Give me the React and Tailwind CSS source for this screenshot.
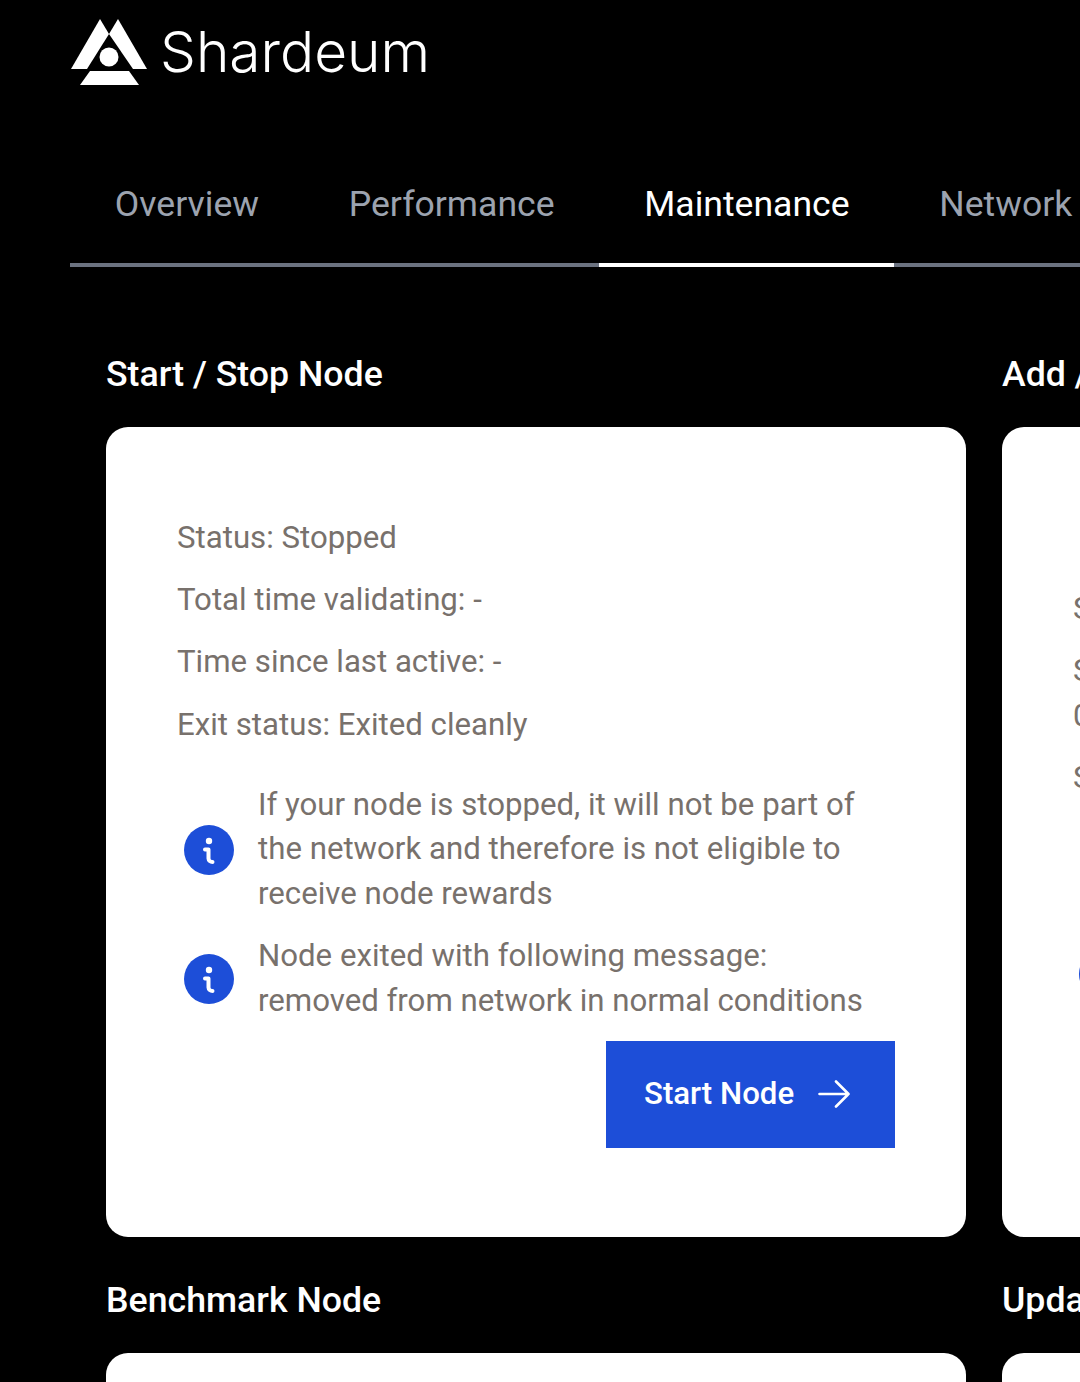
import React from "react";

const tabs = ["Overview", "Performance", "Maintenance", "Network", "Settings"];

const Logo = () => (
  <svg width="77" height="68" viewBox="0 0 77 68" fill="white" className="shrink-0">
    <path d="M0 51L29 1L38 16L16 51Z" />
    <path d="M76 51L47 1L38 16L62 51Z" />
    <circle cx="38" cy="39" r="9.5" />
    <path d="M19 53H58L68 67H9Z" />
  </svg>
);

const InfoIcon = () => (
  <svg width="50" height="50" viewBox="0 0 50 50" className="shrink-0">
    <circle cx="25" cy="25" r="25" fill="#1d4ed8" />
    <circle cx="25" cy="16" r="3.2" fill="white" />
    <path d="M21 24.5H24.5L24.5 33.5C24.5 35.5 26.5 37 28.5 37" fill="none" stroke="white" strokeWidth="4" strokeLinecap="round" strokeLinejoin="round" />
  </svg>
);

const Card = ({ title, children, cardClass, titleClass }) => (
  <div className="w-[860px] shrink-0">
    <h2 className={`text-[35.7px] leading-[44px] font-medium text-white whitespace-nowrap ${titleClass}`}>{title}</h2>
    <div className={`bg-white rounded-[22px] ${cardClass}`}>{children}</div>
  </div>
);

export default function App() {
  return (
    <div className="w-[1080px] h-[1382px] bg-black overflow-hidden font-['Roboto',sans-serif]">
      <header className="pl-[71px] pt-[18px] flex items-start gap-[12px] h-[85px]">
        <Logo />
        <span className="font-['Inter',sans-serif] font-light text-[56.8px] leading-[68px] text-white">Shardeum</span>
      </header>

      <nav className="ml-[70px] mt-[87px] flex w-[1400px] border-b-[4px] border-[#6b7280]">
        {tabs.map((tab) => (
          <div
            key={tab}
            className={`px-[44.85px] h-[95px] -mb-[4px] flex items-center text-[35.6px] whitespace-nowrap border-b-[4px] pb-[25px] ${
              tab === "Maintenance" ? "text-white border-white" : "text-[#9ca3af] border-transparent"
            }`}
          >
            {tab}
          </div>
        ))}
      </nav>

      <div className="pl-[106px] pt-[85px] flex gap-[36px]">
        <Card title="Start / Stop Node" titleClass="mb-[31px]" cardClass="h-[810px] pt-[93px] pl-[71px] pr-[71px]">
          <div className="flex flex-col gap-[26.2px] text-[31.2px] leading-[36px] text-[#78716c]">
            <p>Status: Stopped</p>
            <p>Total time validating: -</p>
            <p>Time since last active: -</p>
            <p>Exit status: Exited cleanly</p>
          </div>
          <div className="mt-[40px] flex items-center gap-[24px] pl-[7px] pr-[25px] text-[31.2px] leading-[44.8px] text-[#78716c]">
            <InfoIcon />
            <p>If your node is stopped, it will not be part of the network and therefore is not eligible to receive node rewards</p>
          </div>
          <div className="mt-[17px] flex items-center gap-[24px] pl-[7px] pr-[25px] text-[31.2px] leading-[44.8px] text-[#78716c]">
            <InfoIcon />
            <p>Node exited with following message: removed from network in normal conditions</p>
          </div>
          <div className="mt-[17px] flex justify-end">
            <button className="w-[289px] h-[107px] bg-[#1d4ed8] flex items-center pl-[38px] gap-[24px] text-white text-[31.2px] font-medium">
              Start Node
              <svg width="32" height="32" viewBox="0 0 32 32" fill="none" stroke="white" strokeWidth="2.6" strokeLinecap="round" strokeLinejoin="round">
                <path d="M1.5 16H30.5M18 3.5L30.5 16L18 28.5" />
              </svg>
            </button>
          </div>
        </Card>

        <Card title="Add / Remove Stake" titleClass="mb-[31px]" cardClass="h-[810px] pt-[160px] pl-[71px]">
          <div className="text-[31.2px] leading-[44.8px] text-[#78716c]">
            <p>Stake requirement</p>
            <p className="mt-[17px]">Stake address</p>
            <p>0x0000</p>
            <p className="mt-[18px]">Stake amount</p>
          </div>
          <div className="mt-[148px] pl-[6px]">
            <InfoIcon />
          </div>
        </Card>
      </div>

      <div className="pl-[106px] pt-[41px] flex gap-[36px]">
        <Card title="Benchmark Node" titleClass="mb-[31px]" cardClass="h-[200px]" />
        <Card title="Update Node" titleClass="mb-[31px]" cardClass="h-[200px]" />
      </div>
    </div>
  );
}
